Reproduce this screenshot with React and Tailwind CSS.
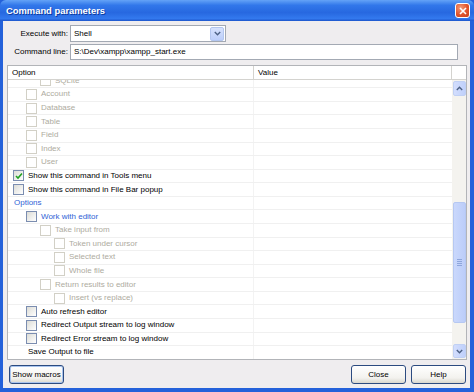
import React from 'react'

const ROWS = [
  { label: 'SQLite', level: 2, dis: true },
  { label: 'Account', level: 1, dis: true },
  { label: 'Database', level: 1, dis: true },
  { label: 'Table', level: 1, dis: true },
  { label: 'Field', level: 1, dis: true },
  { label: 'Index', level: 1, dis: true },
  { label: 'User', level: 1, dis: true },
  { label: 'Show this command in Tools menu', level: 0, checked: true },
  { label: 'Show this command in File Bar popup', level: 0 },
  { label: 'Options', kind: 'header' },
  { label: 'Work with editor', level: 1, blue: true },
  { label: 'Take input from', level: 2, dis: true },
  { label: 'Token under cursor', level: 3, dis: true },
  { label: 'Selected text', level: 3, dis: true },
  { label: 'Whole file', level: 3, dis: true },
  { label: 'Return results to editor', level: 2, dis: true },
  { label: 'Insert (vs replace)', level: 3, dis: true },
  { label: 'Auto refresh editor', level: 1 },
  { label: 'Redirect Output stream to log window', level: 1 },
  { label: 'Redirect Error stream to log window', level: 1 },
  { label: 'Save Output to file', kind: 'text' },
]

const INDENT = ['pl-[5px]', 'pl-[18px]', 'pl-[32px]', 'pl-[46px]']

function Check({ dis, checked }) {
  return (
    <span
      className={`flex h-[11px] w-[11px] shrink-0 items-center justify-center border ${
        dis
          ? 'border-[#d2d0c6] bg-white'
          : 'border-[#7b8db0] bg-[linear-gradient(135deg,#dcdcd6,#ffffff)]'
      }`}
    >
      {checked && (
        <svg width="8" height="8" viewBox="0 0 8 8">
          <path d="M1 4 L3 6 L7 1.5" fill="none" stroke="#21a121" strokeWidth="1.6" />
        </svg>
      )}
    </span>
  )
}

function Row({ row }) {
  let cell
  if (row.kind === 'header') {
    cell = <span className="pl-[6px] text-[#2f5fd6]">{row.label}</span>
  } else if (row.kind === 'text') {
    cell = <span className="pl-[20px] text-black">{row.label}</span>
  } else {
    cell = (
      <div className={`flex items-center gap-[4px] ${INDENT[row.level]}`}>
        <Check dis={row.dis} checked={row.checked} />
        <span className={row.dis ? 'text-[#aeaba0]' : row.blue ? 'text-[#2f5fd6]' : 'text-black'}>
          {row.label}
        </span>
      </div>
    )
  }
  return (
    <div className="flex h-[13.58px] shrink-0 border-b border-[#f0f0f0]">
      <div className="flex w-[246px] items-center whitespace-nowrap border-r border-[#f3f3f3]">{cell}</div>
      <div className="flex-1" />
    </div>
  )
}

function Arrow({ up }) {
  return (
    <svg width="7" height="5" viewBox="0 0 7 5">
      <path d={up ? 'M0.8 4 L3.5 1.3 L6.2 4' : 'M0.8 1 L3.5 3.7 L6.2 1'} fill="none" stroke="#4d6185" strokeWidth="1.4" />
    </svg>
  )
}

function Button({ children, focus }) {
  return (
    <div
      className={`flex h-[19px] w-[55px] items-center justify-center rounded-[3px] border border-[#2c4b80] bg-[linear-gradient(#ffffff,#f3f2ee_70%,#d9d7cf)] text-black ${
        focus ? 'shadow-[inset_0_0_0_1px_#a9c4ee]' : ''
      }`}
    >
      {children}
    </div>
  )
}

export default function App() {
  return (
    <div
      className="flex h-[392px] w-[474px] flex-col overflow-hidden bg-[#2461da] text-[8px] leading-none"
      style={{ fontFamily: '"Liberation Sans", Arial, sans-serif' }}
    >
      {/* title bar */}
      <div className="flex h-[21px] shrink-0 items-center justify-between rounded-t-[6px] bg-[linear-gradient(#64a3f7,#3177ea_25%,#2768e0_60%,#3379ee_88%,#1c55cc)] pl-[6px] pr-[4px]">
        <span className="text-[9.4px] font-bold text-white [text-shadow:1px_1px_0_#0d3a9c]">Command parameters</span>
        <div className="flex h-[15px] w-[15px] items-center justify-center rounded-[3px] border border-white bg-[radial-gradient(circle_at_35%_30%,#f49a78,#e0542c_55%,#c8411c)]">
          <svg width="8" height="8" viewBox="0 0 8 8">
            <path d="M1 1 L7 7 M7 1 L1 7" stroke="white" strokeWidth="1.6" />
          </svg>
        </div>
      </div>

      {/* body */}
      <div className="ml-[3px] mr-[4px] flex flex-1 flex-col bg-[#efedef] pt-[4px] pb-[4px]">
        <div className="flex items-center gap-[2px]">
          <span className="w-[65px] text-right text-black">Execute with:</span>
          <div className="flex h-[17px] w-[156px] items-center border border-[#a3a9b3] bg-white pl-[3px] pr-[1px]">
            <span className="flex-1">Shell</span>
            <div className="flex h-[14px] w-[14px] items-center justify-center rounded-[2px] border border-[#b3c6ef] bg-[linear-gradient(#d7e2fd,#bccefa)]">
              <Arrow />
            </div>
          </div>
        </div>
        <div className="mt-[2px] flex items-center gap-[2px]">
          <span className="w-[65px] text-right text-black">Command line:</span>
          <div className="flex h-[16px] w-[388px] items-center border border-[#a3a9b3] bg-white pl-[3px]">
            S:\Dev\xampp\xampp_start.exe
          </div>
        </div>

        {/* grid */}
        <div className="ml-[4px] mt-[5px] flex h-[295px] w-[460px] flex-col border border-[#b2b4b8] bg-white">
          <div className="flex h-[14px] shrink-0 border-b border-[#d4d3cf]">
            <div className="flex w-[246px] items-center border-r border-[#d4d3cf] pl-[4px]">Option</div>
            <div className="flex w-[198px] items-center border-r border-[#d4d3cf] pl-[4px]">Value</div>
            <div className="flex-1" />
          </div>
          <div className="flex min-h-0 flex-1">
            <div className="flex flex-1 flex-col overflow-hidden">
              <div className="mt-[-5.4px] flex flex-col">
                {ROWS.map((r) => (
                  <Row key={r.label} row={r} />
                ))}
              </div>
            </div>
            {/* scrollbar */}
            <div className="flex w-[14px] flex-col bg-[#f4f3ef] px-[0.5px]">
              <div className="mt-[1px] flex h-[15px] items-center justify-center rounded-[2px] border border-[#c0d0f4] bg-[linear-gradient(90deg,#d3defd,#bfd0fb)]">
                <Arrow up />
              </div>
              <div className="h-[106px]" />
              <div className="flex h-[121px] items-center justify-center rounded-[2px] border border-[#b6c8f2] bg-[linear-gradient(90deg,#cad8fc,#bccdf9)]">
                <div className="flex flex-col gap-[1px]">
                  <div className="h-px w-[5px] bg-[#8ea6dc]" />
                  <div className="h-px w-[5px] bg-[#8ea6dc]" />
                  <div className="h-px w-[5px] bg-[#8ea6dc]" />
                  <div className="h-px w-[5px] bg-[#8ea6dc]" />
                </div>
              </div>
              <div className="flex-1" />
              <div className="mb-[1px] flex h-[14px] items-center justify-center rounded-[2px] border border-[#c0d0f4] bg-[linear-gradient(90deg,#d3defd,#bfd0fb)]">
                <Arrow />
              </div>
            </div>
          </div>
        </div>

        {/* buttons */}
        <div className="mt-[5px] flex pl-[6px] pr-[4px]">
          <Button focus>Show macros</Button>
          <div className="flex-1" />
          <div className="flex gap-[5px]">
            <Button>Close</Button>
            <Button>Help</Button>
          </div>
        </div>
      </div>
      <div className="h-[4px] shrink-0" />
    </div>
  )
}
